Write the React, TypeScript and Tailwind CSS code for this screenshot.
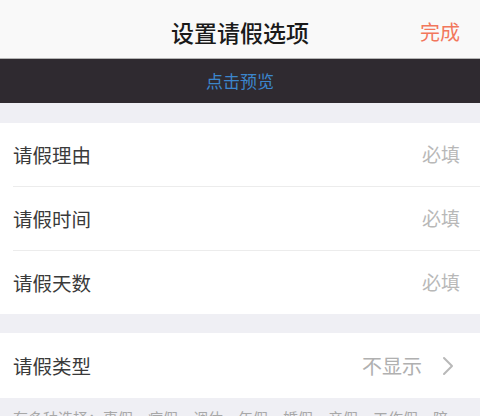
import React from "react";

const FONT = "font-['Noto_Sans_CJK_SC','Noto_Sans',sans-serif]";

const REQUIRED_ROWS = ["请假理由", "请假时间", "请假天数"];

function Row({ label, value, last }: { label: string; value: string; last?: boolean }) {
  return (
    <div className="pl-[13px]">
      <div
        className={`flex h-[63px] items-center justify-between pr-[20px] ${
          last ? "" : "border-b border-[#ececec]"
        } box-content`}
      >
        <span className="text-[19.5px] text-[#3a3a3a]">{label}</span>
        <span className="text-[19px] text-[#b8b8b8]">{value}</span>
      </div>
    </div>
  );
}

export default function App() {
  return (
    <div className={`${FONT} h-[416px] w-[480px] overflow-hidden bg-[#efeff4]`}>
      <header className="relative flex h-[59px] items-center justify-center border-b border-[#b5b5b5] bg-[#f9f9f9]">
        <h1 className="pt-[6px] text-[23px] font-medium text-[#1a1a1a]">设置请假选项</h1>
        <button
          type="button"
          className="absolute right-[20px] top-1/2 -translate-y-1/2 pt-[6px] text-[20px] text-[#f2775c]"
        >
          完成
        </button>
      </header>

      <div className="flex h-[44px] items-center justify-center bg-[#2f2a30]">
        <span className="text-[17px] text-[#3c86cc]">点击预览</span>
      </div>

      <div className="h-[20px]" />

      <section className="bg-white">
        {REQUIRED_ROWS.map((label, i) => (
          <Row key={label} label={label} value="必填" last={i === REQUIRED_ROWS.length - 1} />
        ))}
      </section>

      <div className="h-[19px]" />

      <section className="flex h-[65px] items-center justify-between bg-white pl-[13px] pr-[26px]">
        <span className="text-[19.5px] text-[#3a3a3a]">请假类型</span>
        <div className="flex items-center gap-[20px]">
          <span className="text-[20px] text-[#b0b0b0]">不显示</span>
          <svg width="12" height="20" viewBox="0 0 12 20" fill="none">
            <path d="M2 2l8 8-8 8" stroke="#b8b8b8" strokeWidth="2" strokeLinecap="round" strokeLinejoin="round" />
          </svg>
        </div>
      </section>

      <p className="whitespace-nowrap pl-[13px] pt-[9px] text-[15px] leading-[22px] text-[#a8a8a8]">
        有多种选择：事假、病假、调休、年假、婚假、产假、工作假、陪
      </p>
    </div>
  );
}
